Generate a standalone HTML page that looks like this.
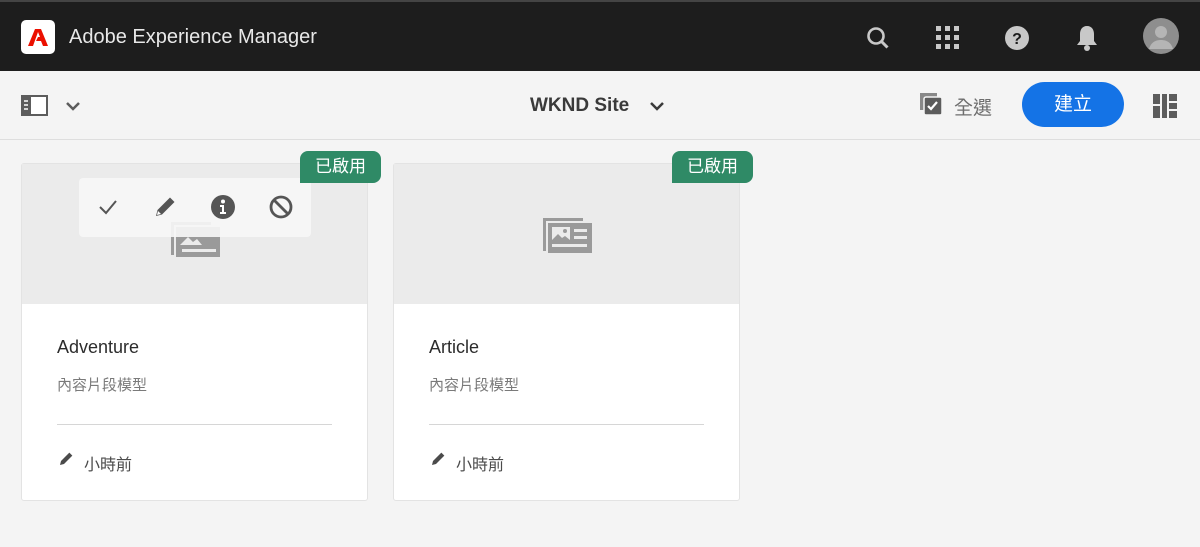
<!DOCTYPE html>
<html><head><meta charset="utf-8"><style>
*{margin:0;padding:0;box-sizing:border-box}
body{width:1200px;height:547px;background:#f4f4f4;font-family:"Liberation Sans","Noto Sans CJK TC",sans-serif;position:relative;overflow:hidden}
.hdr{position:absolute;left:0;top:0;width:1200px;height:71px;background:#1d1d1d;border-top:2px solid #444}
.logo{position:absolute;left:21px;top:18px;width:34px;height:34px;background:#fff;border-radius:5px}
.ttl{position:absolute;left:69px;top:24px;color:#e8e8e8;font-size:20px}
.tb{position:absolute;left:0;top:71px;width:1200px;height:69px;background:#f4f4f4;border-bottom:1px solid #dedede}
.abs{position:absolute}
.card{position:absolute;top:163px;width:347px;height:338px;background:#fff;border:1px solid #e3e3e3;border-radius:3px}
.img{position:absolute;left:0;top:0;width:345px;height:140px;background:#ebebeb}
.badge{position:absolute;top:151px;width:81px;height:32px;background:#2f8a66;color:#fff;font-size:17px;border-radius:8px 8px 8px 0;text-align:center;line-height:32px}
.t{position:absolute;left:35px;top:173px;font-size:18px;color:#2c2c2c}
.s{position:absolute;left:35px;top:210px;font-size:15px;color:#7a7a7a}
.d{position:absolute;left:35px;top:260px;width:275px;height:1px;background:#d6d6d6}
.m{position:absolute;left:62px;top:287px;font-size:16px;color:#4b4b4b}
</style></head><body>
<div class="hdr">
<div class="logo"><svg width="34" height="34" viewBox="0 0 34 34"><path d="M14 9h6l7 17h-5l-2-5h-5l2-4h2l-2-5-5 14H7z" fill="#eb1000"/></svg></div>
<div class="ttl">Adobe Experience Manager</div>
<svg class="abs" style="left:866px;top:24px" width="24" height="24" viewBox="0 0 24 24"><circle cx="10" cy="10" r="7.5" stroke="#c8c8c8" stroke-width="2.6" fill="none"/><path d="M15.5 15.5l6 6" stroke="#c8c8c8" stroke-width="3"/></svg>
<svg class="abs" style="left:936px;top:24px" width="24" height="24" viewBox="0 0 24 24" fill="#c8c8c8"><rect x="0" y="0" width="5" height="5"/><rect x="9" y="0" width="5" height="5"/><rect x="18" y="0" width="5" height="5"/><rect x="0" y="9" width="5" height="5"/><rect x="9" y="9" width="5" height="5"/><rect x="18" y="9" width="5" height="5"/><rect x="0" y="18" width="5" height="5"/><rect x="9" y="18" width="5" height="5"/><rect x="18" y="18" width="5" height="5"/></svg>
<svg class="abs" style="left:1005px;top:24px" width="24" height="24" viewBox="0 0 24 24"><circle cx="12" cy="12" r="12" fill="#c8c8c8"/><text x="12" y="18" font-size="16" font-weight="bold" text-anchor="middle" fill="#1d1d1d" font-family="Liberation Sans">?</text></svg>
<svg class="abs" style="left:1075px;top:22px" width="24" height="28" viewBox="0 0 24 28" fill="#c8c8c8"><path d="M12 2c-5 0-7 4-7 8v7l-3 4h20l-3-4v-7c0-4-2-8-7-8z"/><circle cx="12" cy="24" r="3"/></svg>
<svg class="abs" style="left:1143px;top:16px" width="36" height="36" viewBox="0 0 36 36"><circle cx="18" cy="18" r="18" fill="#8e8e8e"/><circle cx="18" cy="14" r="6" fill="#b5b5b5"/><path d="M6 31c2-7 7-9 12-9s10 2 12 9z" fill="#b5b5b5"/></svg>
</div>
<div class="tb">
<svg class="abs" style="left:21px;top:24px" width="27" height="21" viewBox="0 0 27 21"><rect x="1" y="1" width="25" height="19" fill="#fff" stroke="#5c5c5c" stroke-width="2"/><rect x="1" y="1" width="9" height="19" fill="#5c5c5c"/><path d="M3 6h4M3 10h4M3 14h4" stroke="#fff" stroke-width="1.5"/></svg>
<svg class="abs" style="left:65px;top:30px" width="16" height="10" viewBox="0 0 16 10"><path d="M2 2l6 6 6-6" stroke="#5c5c5c" stroke-width="2.5" fill="none"/></svg>
<div class="abs" style="left:530px;top:24px;font-size:19px;font-weight:bold;color:#3a3a3a">WKND Site</div>
<svg class="abs" style="left:649px;top:30px" width="16" height="10" viewBox="0 0 16 10"><path d="M2 2l6 6 6-6" stroke="#3a3a3a" stroke-width="2.5" fill="none"/></svg>
<svg class="abs" style="left:919px;top:21px" width="24" height="24" viewBox="0 0 24 24"><rect x="1" y="1" width="17" height="17" fill="#888"/><rect x="5" y="5" width="18" height="18" rx="2" fill="#5c5c5c" stroke="#f4f4f4" stroke-width="1.5"/><path d="M9 14l3 3 6-7" stroke="#fff" stroke-width="2.2" fill="none"/></svg>
<div class="abs" style="left:954px;top:22px;font-size:19px;color:#6e6e6e">全選</div>
<div class="abs" style="left:1022px;top:11px;width:102px;height:45px;background:#1473e6;border-radius:23px;color:#fff;font-size:19px;text-align:center;line-height:45px">建立</div>
<svg class="abs" style="left:1153px;top:23px" width="24" height="24" viewBox="0 0 24 24" fill="#5c5c5c"><rect x="0" y="0" width="7" height="10"/><rect x="0" y="12" width="7" height="12"/><rect x="9" y="0" width="5" height="24"/><rect x="16" y="0" width="8" height="7"/><rect x="16" y="9" width="8" height="6"/><rect x="16" y="17" width="8" height="7"/></svg>
</div>

<div class="card" style="left:21px"><div class="img">
<svg class="abs" style="left:146px;top:55px" width="52" height="40" viewBox="0 0 52 40"><path d="M3 3h40v3H6v30H3z" fill="#9a9a9a"/><rect x="8" y="8" width="44" height="30" fill="#9a9a9a"/><path d="M12 26l8-8 5 5 4-3 5 6z" fill="#ebebeb"/><rect x="14" y="30" width="34" height="3" fill="#ebebeb"/></svg>
<div class="abs" style="left:57px;top:14px;width:232px;height:59px;background:rgba(246,246,246,.92);border-radius:4px"></div>
<svg class="abs" style="left:76px;top:34px" width="20" height="18" viewBox="0 0 20 18"><path d="M2 9l6 6L18 3" stroke="#555" stroke-width="2" fill="none"/></svg>
<svg class="abs" style="left:131px;top:31px" width="24" height="24" viewBox="0 0 24 24"><path d="M3 21l1.5-6L17 2.5l4.5 4.5L9 19.5z" fill="#555"/><path d="M4 20l1-4 3 3z" fill="#fff"/></svg>
<svg class="abs" style="left:189px;top:31px" width="24" height="24" viewBox="0 0 24 24"><circle cx="12" cy="12" r="12" fill="#555"/><circle cx="12" cy="6.5" r="2" fill="#fff"/><path d="M9 10h4v7h2v2H9v-2h2v-5H9z" fill="#fff"/></svg>
<svg class="abs" style="left:247px;top:31px" width="24" height="24" viewBox="0 0 24 24"><circle cx="12" cy="12" r="10" stroke="#555" stroke-width="2.8" fill="none"/><path d="M5 5l14 14" stroke="#555" stroke-width="2.8"/></svg>
</div>
<div class="t">Adventure</div><div class="s">內容片段模型</div><div class="d"></div>
<svg class="abs" style="left:36px;top:287px" width="16" height="16" viewBox="0 0 24 24"><path d="M3 21l1.5-6L17 2.5l4.5 4.5L9 19.5z" fill="#4b4b4b"/></svg>
<div class="m">小時前</div></div>
<div class="badge" style="left:300px">已啟用</div>

<div class="card" style="left:393px"><div class="img">
<svg class="abs" style="left:146px;top:51px" width="52" height="40" viewBox="0 0 52 40"><path d="M3 3h40v3H6v30H3z" fill="#9a9a9a"/><rect x="8" y="8" width="44" height="30" fill="#9a9a9a"/><rect x="12" y="12" width="18" height="13" fill="#ebebeb"/><path d="M12 25l6-6 4 4 3-2 5 4z" fill="#9a9a9a"/><circle cx="25" cy="16" r="2" fill="#9a9a9a"/><rect x="34" y="14" width="13" height="3" fill="#ebebeb"/><rect x="34" y="21" width="13" height="3" fill="#ebebeb"/><rect x="12" y="29" width="35" height="3" fill="#ebebeb"/></svg>
</div>
<div class="t">Article</div><div class="s">內容片段模型</div><div class="d"></div>
<svg class="abs" style="left:36px;top:287px" width="16" height="16" viewBox="0 0 24 24"><path d="M3 21l1.5-6L17 2.5l4.5 4.5L9 19.5z" fill="#4b4b4b"/></svg>
<div class="m">小時前</div></div>
<div class="badge" style="left:672px">已啟用</div>
</body></html>
